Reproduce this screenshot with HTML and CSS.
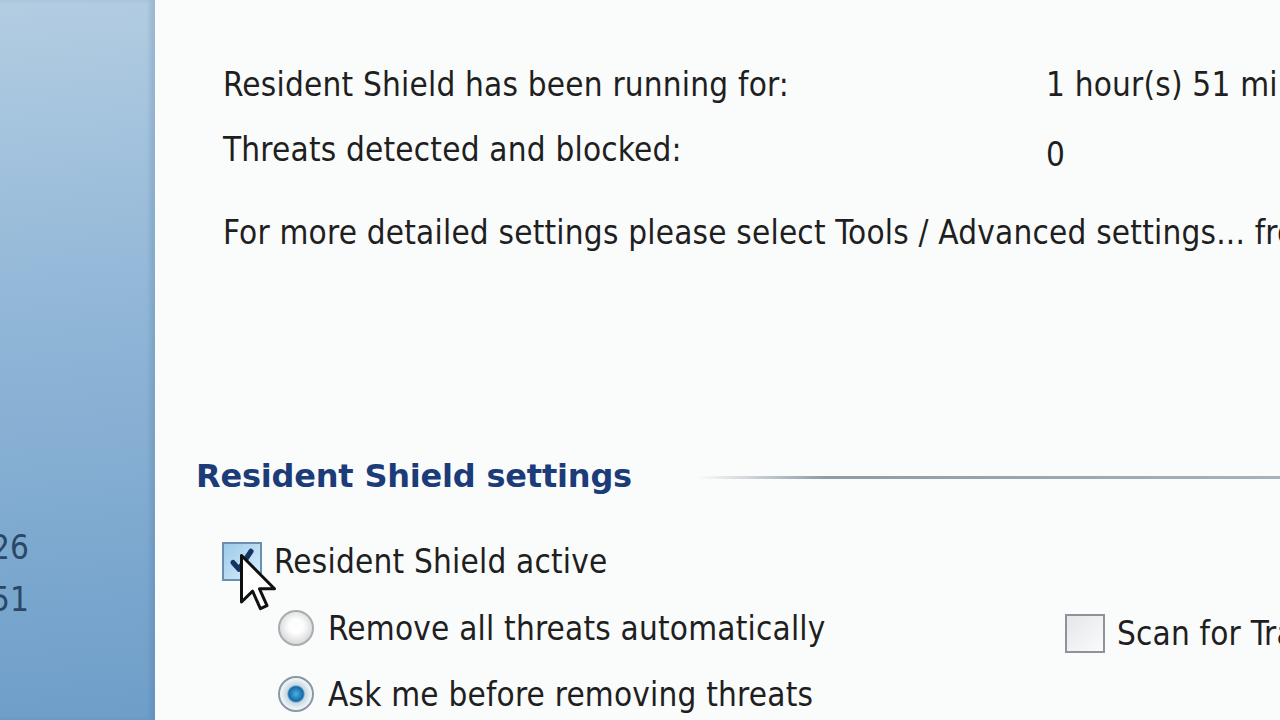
FILE: index.html
```html
<!DOCTYPE html>
<html lang="en">

<head>
    <meta charset="UTF-8">
    <title>Resident Shield</title>
    <link rel="stylesheet" href="styles.css">
</head>

<body>
    <div class="sidebar">
        <div class="side-stats">
            <div class="side-num">26</div>
            <div class="side-num">51</div>
        </div>
    </div>

    <div class="content">
        <div class="stats">
            <div class="stat-row">
                <span class="stat-label">Resident Shield has been running for:</span>
                <span class="stat-value">1 hour(s) 51 minute(s)</span>
            </div>
            <div class="stat-row">
                <span class="stat-label">Threats detected and blocked:</span>
                <span class="stat-value value-low">0</span>
            </div>
            <p class="hint">For more detailed settings please select Tools / Advanced settings... from the menu.</p>
        </div>

        <div class="settings">
            <div class="settings-head">
                <h2>Resident Shield settings</h2>
                <div class="rule"></div>
            </div>

            <label class="option">
                <span class="checkbox checked">
                    <svg viewBox="0 0 20 20" width="30" height="30">
                        <path d="M4 11 L8 15.5 L16 3.5" fill="none" stroke="#16345f" stroke-width="3.4" stroke-linecap="round" stroke-linejoin="round"/>
                    </svg>
                </span>
                Resident Shield active
                <svg class="cursor" viewBox="0 0 12 19" width="36" height="57">
                    <path d="M0.5 0.5 L0.5 16 L4.2 12.4 L6.8 18.2 L9 17.2 L6.5 11.6 L11.5 11.6 Z" fill="#fff" stroke="#111" stroke-width="1" stroke-linejoin="round"/>
                </svg>
            </label>

            <div class="sub-options">
                <div class="radios">
                    <label class="option">
                        <span class="radio"></span>
                        Remove all threats automatically
                    </label>
                    <label class="option">
                        <span class="radio selected"></span>
                        Ask me before removing threats
                    </label>
                </div>
                <label class="option scan-option">
                    <span class="checkbox"></span>
                    Scan for Tracking Cookies
                </label>
            </div>
        </div>
    </div>
</body>

</html>
```

FILE: styles.css
```css
body {
    margin: 0;
    padding: 0;
    width: 1280px;
    height: 720px;
    overflow: hidden;
    display: flex;
    background-color: #fafbfb;
    font-family: "DejaVu Sans Condensed", "DejaVu Sans", Tahoma, sans-serif;
    font-size: 33px;
    letter-spacing: 0.2px;
    color: #1f1f1f;
}

.sidebar {
    width: 155px;
    flex-shrink: 0;
    overflow: hidden;
    background: linear-gradient(175deg, #b3cde2 0%, #93b8d8 40%, #6e9ec9 100%);
    box-shadow: inset -5px 0 4px rgba(60, 100, 140, 0.18);
}

.side-stats {
    margin-top: 528px;
    margin-left: -9px;
    color: #2a4866;
}

.side-num {
    height: 52px;
    line-height: 40px;
}

.content {
    flex: 1;
    min-width: 0;
    overflow: hidden;
    white-space: nowrap;
}

.stats {
    padding: 65px 0 0 68px;
}

.stat-row {
    display: flex;
    height: 65px;
    line-height: 40px;
}

.stat-label {
    width: 823px;
    flex-shrink: 0;
}

.value-low {
    padding-top: 5px;
}

.hint {
    margin: 18px 0 0;
    line-height: 40px;
}

.settings {
    padding: 199px 0 0 41px;
}

.settings-head {
    display: flex;
    align-items: center;
    height: 48px;
}

.settings-head h2 {
    margin: 0;
    font-family: "DejaVu Sans", Tahoma, sans-serif;
    font-size: 32px;
    font-weight: bold;
    letter-spacing: -0.2px;
    color: #1b3c78;
}

.rule {
    flex: 1;
    height: 3px;
    margin-left: 66px;
    margin-top: 2px;
    background: linear-gradient(to right, rgba(140, 155, 165, 0), #8e9ca6 22%, #a7b3bb 100%);
}

.option {
    display: flex;
    align-items: center;
    height: 66px;
    position: relative;
}

.settings > .option {
    margin: 39px 0 0 26px;
    height: 44px;
}

.checkbox {
    width: 36px;
    height: 35px;
    margin-right: 12px;
    border: 2px solid #8d9399;
    background: linear-gradient(135deg, #e4e6e8, #fbfbfb);
    display: flex;
    align-items: center;
    justify-content: center;
    flex-shrink: 0;
}

.checkbox.checked {
    border-color: #6a8fb0;
    background: linear-gradient(135deg, #9ccaea, #d9eefa);
}

.cursor {
    position: absolute;
    left: 18px;
    top: 15px;
}

.sub-options {
    display: flex;
    margin-top: 12px;
}

.radios {
    flex-shrink: 0;
    padding-left: 82px;
    width: 700px;
}

.radio {
    width: 36px;
    height: 36px;
    margin-right: 14px;
    border-radius: 50%;
    border: 2px solid #a9adb0;
    background: radial-gradient(circle at 50% 45%, #fdfdfd 30%, #d6d8da 75%, #eceeef 100%);
    box-sizing: border-box;
    flex-shrink: 0;
}

.radio.selected {
    border-color: #8a98a4;
    background: radial-gradient(circle, #4eb0e0 0%, #126aa8 32%, #c6d8e4 40%, #f4f6f8 70%);
}

.scan-option {
    margin-left: 87px;
    height: 66px;
    margin-top: 5px;
}
```
